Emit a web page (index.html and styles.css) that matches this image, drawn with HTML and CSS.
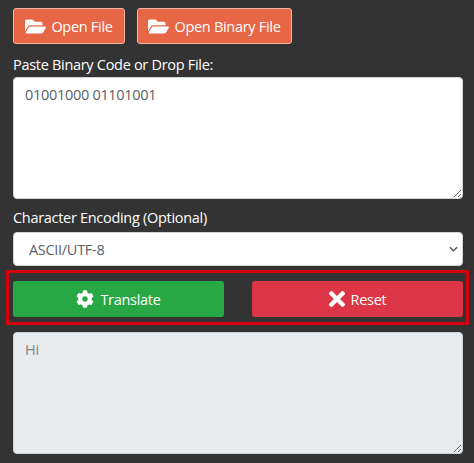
FILE: index.html
```html
<!DOCTYPE html>
<html>
<head>
    <title>Binary Translator</title>
    <link rel="stylesheet" href="styles.css">
</head>
<body>
    <div class="file-buttons">
        <button class="btn btn-file">
            <svg class="icon" xmlns="http://www.w3.org/2000/svg" viewBox="0 0 576 512"><path d="M572.694 292.093L500.27 416.248A63.997 63.997 0 0 1 444.989 448H45.025c-18.523 0-30.064-20.093-20.731-36.093l72.424-124.155A64 64 0 0 1 152 256h399.964c18.523 0 30.064 20.093 20.73 36.093zM152 224h328v-48c0-26.51-21.49-48-48-48H272l-64-64H48C21.49 64 0 85.49 0 112v278.046l69.077-118.418C86.214 242.25 117.989 224 152 224z"/></svg>
            Open File
        </button>
        <button class="btn btn-file">
            <svg class="icon" xmlns="http://www.w3.org/2000/svg" viewBox="0 0 576 512"><path d="M572.694 292.093L500.27 416.248A63.997 63.997 0 0 1 444.989 448H45.025c-18.523 0-30.064-20.093-20.731-36.093l72.424-124.155A64 64 0 0 1 152 256h399.964c18.523 0 30.064 20.093 20.73 36.093zM152 224h328v-48c0-26.51-21.49-48-48-48H272l-64-64H48C21.49 64 0 85.49 0 112v278.046l69.077-118.418C86.214 242.25 117.989 224 152 224z"/></svg>
            Open Binary File
        </button>
    </div>

    <label class="field-label" for="binary-input">Paste Binary Code or Drop File:</label>
    <textarea id="binary-input" class="text-box">01001000 01101001</textarea>

    <label class="field-label encoding-label" for="encoding">Character Encoding (Optional)</label>
    <select id="encoding" class="select-box">
        <option>ASCII/UTF-8</option>
    </select>

    <div class="actions">
        <button class="btn btn-translate">
            <svg class="icon icon-action" xmlns="http://www.w3.org/2000/svg" viewBox="0 0 512 512"><path d="M487.4 315.7l-42.6-24.6c4.3-23.2 4.3-47 0-70.2l42.6-24.6c4.9-2.8 7.1-8.6 5.5-14-11.1-35.6-30-67.8-54.7-94.6-3.8-4.1-10-5.1-14.8-2.3L380.8 110c-17.9-15.4-38.5-27.3-60.8-35.1V25.8c0-5.6-3.9-10.5-9.4-11.7-36.7-8.2-74.3-7.8-109.2 0-5.5 1.2-9.4 6.1-9.4 11.7V75c-22.2 7.9-42.8 19.8-60.8 35.1L88.7 85.5c-4.9-2.8-11-1.9-14.8 2.3-24.7 26.7-43.6 58.9-54.7 94.6-1.7 5.4.6 11.2 5.5 14L67.3 221c-4.3 23.2-4.3 47 0 70.2l-42.6 24.6c-4.9 2.8-7.1 8.6-5.5 14 11.1 35.6 30 67.8 54.7 94.6 3.8 4.1 10 5.1 14.8 2.3l42.6-24.6c17.9 15.4 38.5 27.3 60.8 35.1v49.2c0 5.6 3.9 10.5 9.4 11.7 36.7 8.2 74.3 7.8 109.2 0 5.5-1.2 9.4-6.1 9.4-11.7v-49.2c22.2-7.9 42.8-19.8 60.8-35.1l42.6 24.6c4.9 2.8 11 1.9 14.8-2.3 24.7-26.7 43.6-58.9 54.7-94.6 1.5-5.5-.7-11.3-5.6-14.1zM256 336c-44.1 0-80-35.9-80-80s35.9-80 80-80 80 35.9 80 80-35.9 80-80 80z"/></svg>
            Translate
        </button>
        <button class="btn btn-reset">
            <svg class="icon icon-action icon-close" xmlns="http://www.w3.org/2000/svg" viewBox="0 80 352 352"><path d="M242.72 256l100.07-100.07c12.28-12.28 12.28-32.19 0-44.48l-22.24-22.24c-12.28-12.28-32.19-12.28-44.48 0L176 189.28 75.93 89.21c-12.28-12.28-32.19-12.28-44.48 0L9.21 111.45c-12.28 12.28-12.28 32.19 0 44.48L109.28 256 9.21 356.07c-12.28 12.28-12.28 32.19 0 44.48l22.24 22.24c12.28 12.28 32.2 12.28 44.48 0L176 322.72l100.07 100.07c12.28 12.28 32.2 12.28 44.48 0l22.24-22.24c12.28-12.28 12.28-32.19 0-44.48L242.72 256z"/></svg>
            Reset
        </button>
    </div>

    <textarea class="text-box output-box" readonly>Hi</textarea>
</body>
</html>
```

FILE: styles.css
```css
* {
    margin: 0;
    padding: 0;
    box-sizing: border-box;
    font-family: "Open Sans", "Noto Sans", Arial, sans-serif;
}

body {
    background-color: #333333;
    padding: 8px 11px 0 13px;
    height: 463px;
    overflow: hidden;
    color: #ffffff;
    font-size: 14.5px;
}

/* ========== Buttons ========== */
.btn {
    display: flex;
    align-items: center;
    justify-content: center;
    gap: 6px;
    height: 36px;
    border-radius: 3px;
    border: none;
    color: #ffffff;
    font-size: 14.5px;
    letter-spacing: -0.3px;
    white-space: nowrap;
}

.icon {
    width: 21px;
    height: 19px;
    fill: currentColor;
}

.icon-action {
    width: 18px;
    height: 18px;
}

.icon-close {
    width: 16px;
    height: 16px;
}

.file-buttons {
    display: flex;
    gap: 12px;
}

.btn-file {
    gap: 5px;
    background-color: #e76645;
    border: 1px solid #f4b7a5;
}

.btn-file:first-child {
    width: 112px;
}

.btn-file:last-child {
    width: 155px;
}

/* ========== Form ========== */
.field-label {
    display: block;
    margin-top: 9px;
    height: 24px;
    line-height: 23px;
    letter-spacing: -0.3px;
}

.encoding-label {
    margin-top: 8px;
    height: 25px;
    line-height: 22px;
}

.text-box {
    display: block;
    width: 100%;
    height: 122px;
    padding: 5px 11px;
    background-color: #ffffff;
    color: #5a6168;
    border: 1px solid #ced4da;
    border-radius: 4px;
    font-size: 14.5px;
    line-height: 23px;
    letter-spacing: -0.3px;
}

.select-box {
    display: block;
    width: 100%;
    height: 34px;
    padding: 0 15px;
    appearance: none;
    background: #ffffff url("data:image/svg+xml,%3Csvg xmlns='http://www.w3.org/2000/svg' viewBox='0 0 10 6'%3E%3Cpath d='M1 1l4 4 4-4' fill='none' stroke='%23555' stroke-width='1.6'/%3E%3C/svg%3E") no-repeat right 4px center / 9px 6px;
    color: #5a6168;
    border: 1px solid #ced4da;
    border-radius: 4px;
    font-size: 14.5px;
    letter-spacing: -0.3px;
}

/* ========== Actions ========== */
.actions {
    display: grid;
    grid-template-columns: 211px 211px;
    justify-content: space-between;
    margin: 4px -6px 0 -7px;
    padding: 8px 3px 8px 4px;
    height: 55px;
    border: 3px solid #d4000f;
}

.btn-translate {
    background-color: #28a745;
}

.btn-reset {
    background-color: #dc3545;
}

.output-box {
    margin-top: 7px;
    background-color: #e9ecef;
    color: #7d848b;
}
```
